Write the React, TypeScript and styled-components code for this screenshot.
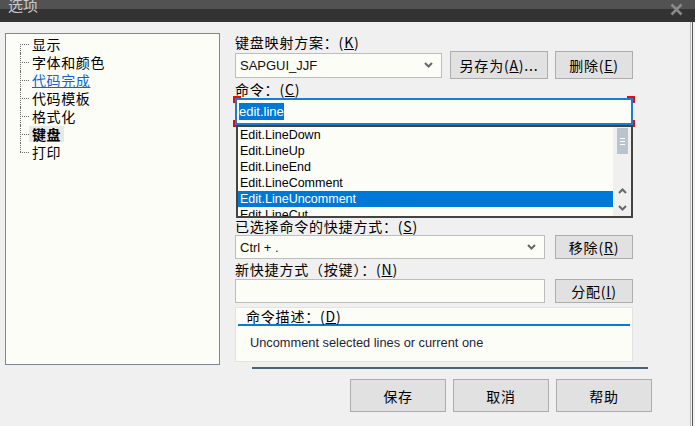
import styled, { createGlobalStyle, css } from 'styled-components'

const GlobalStyle = createGlobalStyle`
  html, body {
    margin: 0;
    padding: 0;
    background: #f0f0f0;
  }
  body {
    font-family: "Noto Sans CJK SC", "Liberation Sans", sans-serif;
    color: #000;
  }
`

const latin = `"Liberation Sans", "Noto Sans CJK SC", sans-serif`

const Window = styled.div`
  width: 695px;
  height: 426px;
  overflow: hidden;
  background: #f0f0f0;
  display: flex;
  flex-direction: column;
`

const TitleBar = styled.div`
  height: 22px;
  flex: none;
  display: flex;
  justify-content: space-between;
  align-items: flex-start;
  padding: 0 12px 0 8px;
  background: linear-gradient(#525252 0 9px, #333333 9px);
  overflow: hidden;
`

const TitleText = styled.span`
  font-size: 15px;
  line-height: 15px;
  margin-top: -3px;
  color: #cacaca;
`

const CloseIcon = styled.svg`
  margin-top: 3px;
`

const Body = styled.div`
  width: 691px;
  flex: 1;
  box-sizing: border-box;
  padding: 11px 0 0 5px;
  border-right: 1px solid #bdbdbd;
  box-shadow: 1px 0 0 #f0f0f0, 2px 0 0 #5c5c5c;
`

const ContentRow = styled.div`
  display: flex;
  gap: 15px;
  height: 332px;
`

const TreePanel = styled.ul`
  margin: 0;
  list-style: none;
  width: 215px;
  height: 332px;
  box-sizing: border-box;
  border: 1px solid #7d8894;
  background: #fdfdf8;
  padding: 1px 0 0 14px;
`

const TreeRow = styled.li`
  display: flex;
  align-items: center;
  height: 18px;
`

const Connector = styled.span<{ $first?: boolean; $last?: boolean }>`
  position: relative;
  width: 9px;
  align-self: stretch;
  flex: none;
  &::before {
    content: '';
    position: absolute;
    left: 0;
    top: ${(p) => (p.$first ? '9px' : '0')};
    bottom: ${(p) => (p.$last ? '9px' : '0')};
    border-left: 1px dotted #6a6a6a;
  }
  &::after {
    content: '';
    position: absolute;
    left: 0;
    top: 9px;
    width: 9px;
    border-top: 1px dotted #6a6a6a;
  }
`

const TreeLabel = styled.span<{ $link?: boolean; $current?: boolean }>`
  display: inline-block;
  height: 16px;
  padding: 0 3px;
  font-size: 14px;
  letter-spacing: 0.6px;
  line-height: 16px;
  color: #000;
  ${(p) =>
    p.$link &&
    css`
      color: #0a66d6;
      text-decoration: underline;
    `}
  ${(p) =>
    p.$current &&
    css`
      font-weight: bold;
      background: #e8e8e8;
    `}
`

const RightColumn = styled.div`
  width: 398px;
  display: flex;
  flex-direction: column;
`

const FieldLabel = styled.div<{ $h: number; $mt?: number }>`
  height: ${(p) => p.$h}px;
  margin-top: ${(p) => p.$mt ?? 0}px;
  display: flex;
  align-items: center;
  font-size: 14px;
  letter-spacing: 0.8px;
  white-space: nowrap;
`

const Row = styled.div<{ $h: number }>`
  display: flex;
  align-items: center;
  height: ${(p) => p.$h}px;
`

const Select = styled.div<{ $w: number; $h: number }>`
  width: ${(p) => p.$w}px;
  height: ${(p) => p.$h}px;
  box-sizing: border-box;
  border: 1px solid #bdbdbd;
  background: #fdfdf8;
  display: flex;
  align-items: center;
  justify-content: space-between;
  padding: 0 8px 0 4px;
  font-family: ${latin};
  font-size: 13px;
  color: #111;
`

const TextBox = styled.div<{ $w: number; $h: number }>`
  width: ${(p) => p.$w}px;
  height: ${(p) => p.$h}px;
  box-sizing: border-box;
  border: 1px solid #bdbdbd;
  background: #fdfdf8;
`

const Button = styled.button<{ $w: number; $h: number; $ml?: number }>`
  width: ${(p) => p.$w}px;
  height: ${(p) => p.$h}px;
  margin-left: ${(p) => p.$ml ?? 0}px;
  padding: 0;
  box-sizing: border-box;
  border: 1px solid #adadad;
  background: #e1e1e1;
  font-family: "Noto Sans CJK SC", "Liberation Sans", sans-serif;
  font-size: 14px;
  letter-spacing: 0.8px;
  color: #000;
  white-space: nowrap;
  flex: none;
`

const CommandWrap = styled.div`
  position: relative;
  height: 27px;
`

const CommandInput = styled.div`
  height: 27px;
  box-sizing: border-box;
  border: 2px solid #1a7dd4;
  background: #fdfdf8;
  display: flex;
  align-items: center;
  padding-left: 2px;
  font-family: ${latin};
  font-size: 13px;
`

const Selection = styled.span`
  background: #0078d7;
  color: #fff;
  line-height: 17px;
`

const Corner = styled.span<{ $v: 'top' | 'bottom'; $h: 'left' | 'right' }>`
  position: absolute;
  width: 6px;
  height: 5px;
  ${(p) => p.$v}: -2px;
  ${(p) => p.$h}: -2px;
  border-${(p) => p.$v}: 2px solid #e01010;
  border-${(p) => p.$h}: 2px solid #e01010;
`

const DropList = styled.div`
  position: absolute;
  top: 27px;
  left: 1px;
  width: 397px;
  height: 93px;
  box-sizing: border-box;
  border: 2px solid #434343;
  background: #fdfdf8;
  display: flex;
  z-index: 2;
`

const ListItems = styled.div`
  flex: 1;
  overflow: hidden;
`

const ListItem = styled.div<{ $selected?: boolean }>`
  height: 16px;
  line-height: 16px;
  padding-left: 2px;
  font-family: ${latin};
  font-size: 12.5px;
  white-space: nowrap;
  background: ${(p) => (p.$selected ? '#0078d7' : 'transparent')};
  color: ${(p) => (p.$selected ? '#fff' : '#000')};
`

const ScrollBar = styled.div`
  width: 18px;
  flex: none;
  background: #f0f0f0;
  display: flex;
  flex-direction: column;
  align-items: center;
`

const Thumb = styled.div`
  margin-top: 1px;
  width: 11px;
  height: 26px;
  background: #b9c4cc;
  display: flex;
  flex-direction: column;
  justify-content: center;
  align-items: center;
  gap: 2px;
  & > i {
    width: 5px;
    height: 1px;
    background: #fff;
  }
`

const ArrowBox = styled.div`
  height: 17px;
  width: 18px;
  display: flex;
  align-items: center;
  justify-content: center;
`

const Spacer = styled.div`
  flex: 1;
`

const DescBox = styled.div`
  margin-top: 4px;
  height: 55px;
  box-sizing: border-box;
  border: 1px solid #e3e3e3;
  background: #fdfdf8;
  padding: 0 2px;
`

const DescTitle = styled.div`
  height: 16px;
  line-height: 16px;
  padding-left: 8px;
  font-size: 14px;
  letter-spacing: 0.8px;
  border-bottom: 2px solid #0a7ad6;
`

const DescText = styled.div`
  padding: 9px 0 0 12px;
  font-family: ${latin};
  font-size: 12.8px;
  color: #1e1e3c;
`

const Footer = styled.div`
  display: flex;
  flex-direction: column;
`

const Divider = styled.div`
  margin: 2px 0 0 247px;
  width: 396px;
  height: 2px;
  background: #4a6272;
`

const ButtonBar = styled.div`
  display: flex;
  gap: 7px;
  margin: 10px 0 0 345px;
`

const Chevron = ({ up = false }: { up?: boolean }) => (
  <svg width="9" height="6" viewBox="0 0 9 6">
    <path
      d={up ? 'M1 5 L4.5 1.5 L8 5' : 'M1 1 L4.5 4.5 L8 1'}
      fill="none"
      stroke="#676767"
      strokeWidth="2"
    />
  </svg>
)

const treeItems = ['显示', '字体和颜色', '代码完成', '代码模板', '格式化', '键盘', '打印']

const commands = [
  'Edit.LineDown',
  'Edit.LineUp',
  'Edit.LineEnd',
  'Edit.LineComment',
  'Edit.LineUncomment',
  'Edit.LineCut',
]

const App = () => {
  return (
    <>
      <GlobalStyle />
      <Window>
        <TitleBar>
          <TitleText>选项</TitleText>
          <CloseIcon width="13" height="13" viewBox="0 0 13 13">
            <path d="M1.5 1.5 L11.5 11.5 M11.5 1.5 L1.5 11.5" stroke="#8a8a8a" strokeWidth="2.6" />
          </CloseIcon>
        </TitleBar>
        <Body>
          <ContentRow>
            <TreePanel>
              {treeItems.map((item, i) => (
                <TreeRow key={item}>
                  <Connector $first={i === 0} $last={i === treeItems.length - 1} />
                  <TreeLabel $link={item === '代码完成'} $current={item === '键盘'}>
                    {item}
                  </TreeLabel>
                </TreeRow>
              ))}
            </TreePanel>
            <RightColumn>
              <FieldLabel $h={18}>
                键盘映射方案：(<u>K</u>)
              </FieldLabel>
              <Row $h={28}>
                <Select $w={207} $h={25}>
                  SAPGUI_JJF
                  <Chevron />
                </Select>
                <Button $w={98} $h={28} $ml={8}>
                  另存为(<u>A</u>)...
                </Button>
                <Button $w={78} $h={28} $ml={7}>
                  删除(<u>E</u>)
                </Button>
              </Row>
              <FieldLabel $h={19}>
                命令：(<u>C</u>)
              </FieldLabel>
              <CommandWrap>
                <CommandInput>
                  <Selection>edit.line</Selection>
                </CommandInput>
                <Corner $v="top" $h="left" />
                <Corner $v="bottom" $h="left" />
                <Corner $v="top" $h="right" />
                <Corner $v="bottom" $h="right" />
                <DropList>
                  <ListItems>
                    {commands.map((c) => (
                      <ListItem key={c} $selected={c === 'Edit.LineUncomment'}>
                        {c}
                      </ListItem>
                    ))}
                  </ListItems>
                  <ScrollBar>
                    <Thumb>
                      <i />
                      <i />
                      <i />
                    </Thumb>
                    <Spacer />
                    <ArrowBox>
                      <Chevron up />
                    </ArrowBox>
                    <ArrowBox>
                      <Chevron />
                    </ArrowBox>
                  </ScrollBar>
                </DropList>
              </CommandWrap>
              <FieldLabel $h={19} $mt={91}>
                已选择命令的快捷方式：(<u>S</u>)
              </FieldLabel>
              <Row $h={24}>
                <Select $w={310} $h={24}>
                  Ctrl + .
                  <Chevron />
                </Select>
                <Button $w={78} $h={24} $ml={10}>
                  移除(<u>R</u>)
                </Button>
              </Row>
              <FieldLabel $h={20}>
                新快捷方式（按键）：(<u>N</u>)
              </FieldLabel>
              <Row $h={24}>
                <TextBox $w={310} $h={24} />
                <Button $w={78} $h={24} $ml={10}>
                  分配(<u>I</u>)
                </Button>
              </Row>
              <DescBox>
                <DescTitle>
                  命令描述：(<u>D</u>)
                </DescTitle>
                <DescText>Uncomment selected lines or current one</DescText>
              </DescBox>
            </RightColumn>
          </ContentRow>
          <Footer>
            <Divider />
            <ButtonBar>
              <Button $w={96} $h={33}>保存</Button>
              <Button $w={96} $h={33}>取消</Button>
              <Button $w={96} $h={33}>帮助</Button>
            </ButtonBar>
          </Footer>
        </Body>
      </Window>
    </>
  )
}

export default App
